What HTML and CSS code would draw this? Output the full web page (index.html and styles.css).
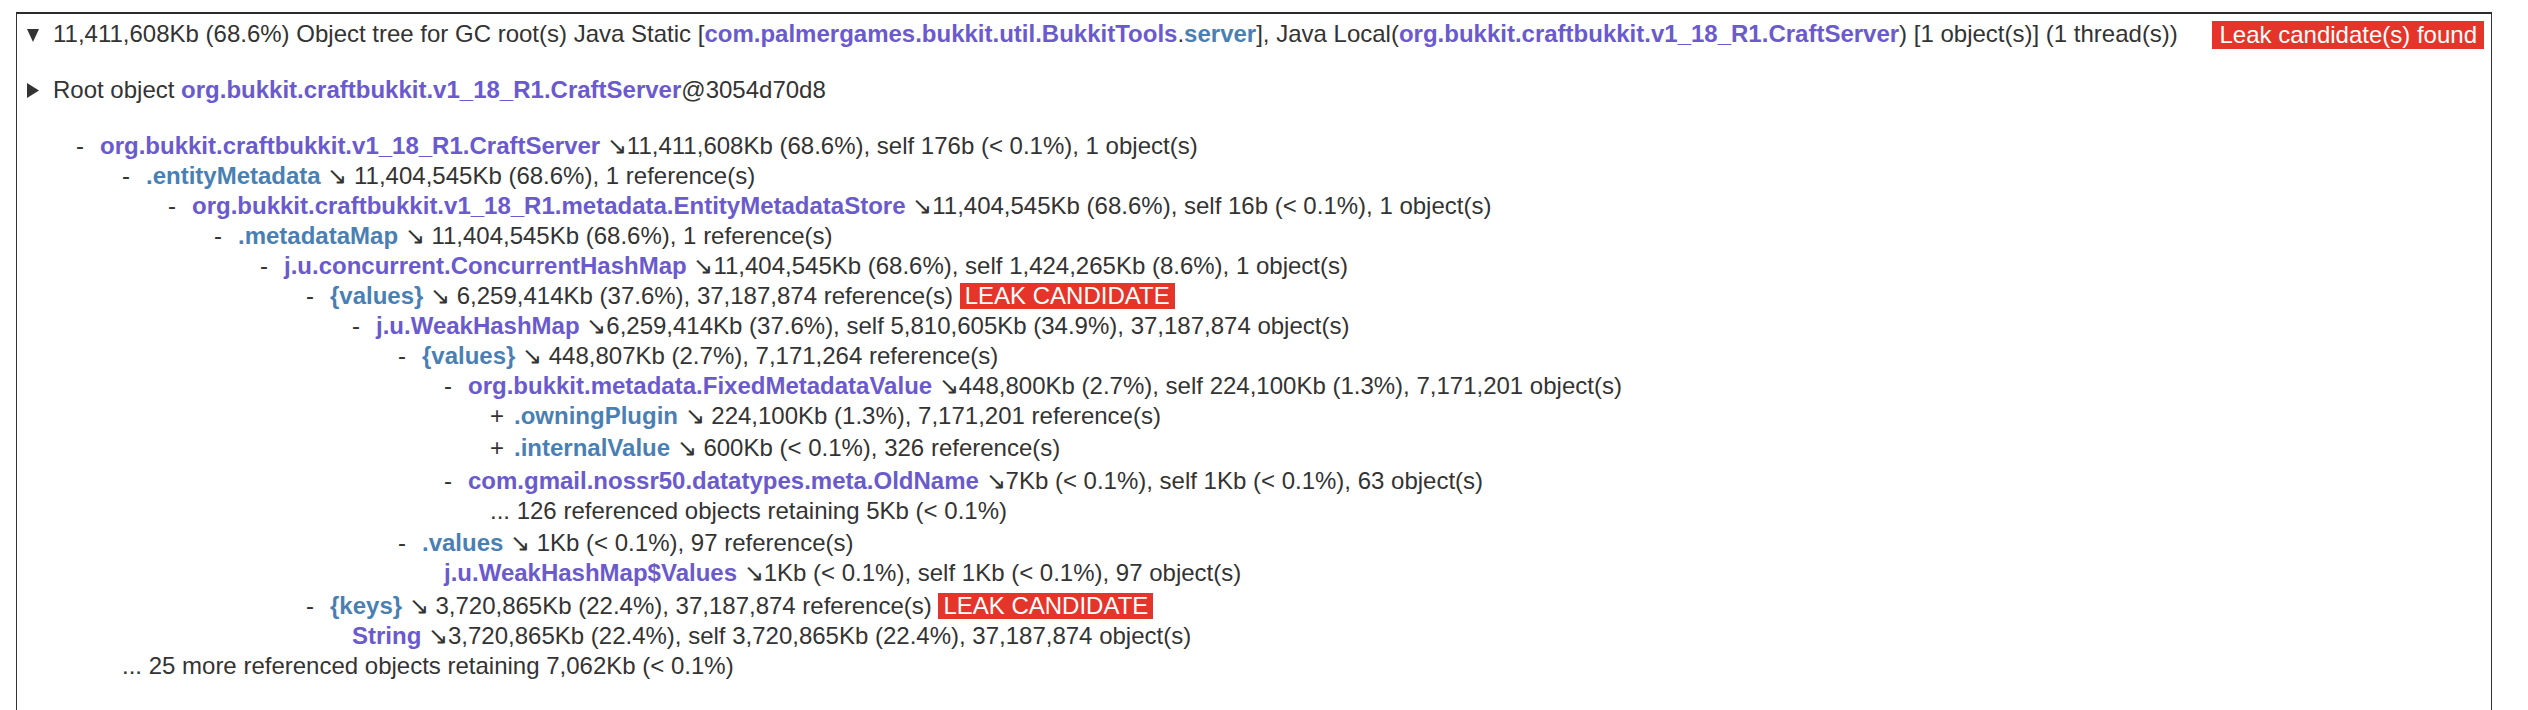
FILE: index.html
```html
<!DOCTYPE html>
<html>
<head>
<meta charset="utf-8">
<title>Object tree</title>
<link rel="stylesheet" href="styles.css">
</head>
<body>
<div class="panel">
  <div class="head">
    <div class="head-text"><svg class="tri tri-down" width="12" height="13" viewBox="0 0 12 13"><polygon points="0,0 12,0 6,13"/></svg>11,411,608Kb (68.6%) Object tree for GC root(s) Java Static [<b class="cls">com.palmergames.bukkit.util.BukkitTools</b>.<b class="fld">server</b>], Java Local(<b class="cls">org.bukkit.craftbukkit.v1_18_R1.CraftServer</b>) [1 object(s)] (1 thread(s))</div>
    <span class="badge-big">Leak candidate(s) found</span>
  </div>
  <div class="root-line"><svg class="tri tri-right" width="12" height="15" viewBox="0 0 12 15"><polygon points="0,0 12,7.5 0,15"/></svg>Root object <b class="cls">org.bukkit.craftbukkit.v1_18_R1.CraftServer</b>@3054d70d8</div>

  <div class="tree">
    <div class="node">
      <div class="row"><span class="mk">-</span><b class="cls">org.bukkit.craftbukkit.v1_18_R1.CraftServer</b> ↘11,411,608Kb (68.6%), self 176b (&lt; 0.1%), 1 object(s)</div>
      <div class="kids">
        <div class="node">
          <div class="row"><span class="mk">-</span><b class="fld">.entityMetadata</b> ↘ 11,404,545Kb (68.6%), 1 reference(s)</div>
          <div class="kids">
            <div class="node">
              <div class="row"><span class="mk">-</span><b class="cls">org.bukkit.craftbukkit.v1_18_R1.metadata.EntityMetadataStore</b> ↘11,404,545Kb (68.6%), self 16b (&lt; 0.1%), 1 object(s)</div>
              <div class="kids">
                <div class="node">
                  <div class="row"><span class="mk">-</span><b class="fld">.metadataMap</b> ↘ 11,404,545Kb (68.6%), 1 reference(s)</div>
                  <div class="kids">
                    <div class="node">
                      <div class="row"><span class="mk">-</span><b class="cls">j.u.concurrent.ConcurrentHashMap</b> ↘11,404,545Kb (68.6%), self 1,424,265Kb (8.6%), 1 object(s)</div>
                      <div class="kids">
                        <div class="node">
                          <div class="row"><span class="mk">-</span><b class="fld">{values}</b> ↘ 6,259,414Kb (37.6%), 37,187,874 reference(s) <span class="badge">LEAK CANDIDATE</span></div>
                          <div class="kids">
                            <div class="node">
                              <div class="row"><span class="mk">-</span><b class="cls">j.u.WeakHashMap</b> ↘6,259,414Kb (37.6%), self 5,810,605Kb (34.9%), 37,187,874 object(s)</div>
                              <div class="kids">
                                <div class="node">
                                  <div class="row"><span class="mk">-</span><b class="fld">{values}</b> ↘ 448,807Kb (2.7%), 7,171,264 reference(s)</div>
                                  <div class="kids">
                                    <div class="node">
                                      <div class="row"><span class="mk">-</span><b class="cls">org.bukkit.metadata.FixedMetadataValue</b> ↘448,800Kb (2.7%), self 224,100Kb (1.3%), 7,171,201 object(s)</div>
                                      <div class="kids">
                                        <div class="node">
                                          <div class="row"><span class="mk">+</span><b class="fld">.owningPlugin</b> ↘ 224,100Kb (1.3%), 7,171,201 reference(s)</div>
                                        </div>
                                        <div class="node gap-s">
                                          <div class="row"><span class="mk">+</span><b class="fld">.internalValue</b> ↘ 600Kb (&lt; 0.1%), 326 reference(s)</div>
                                        </div>
                                      </div>
                                    </div>
                                    <div class="node gap-l">
                                      <div class="row"><span class="mk">-</span><b class="cls">com.gmail.nossr50.datatypes.meta.OldName</b> ↘7Kb (&lt; 0.1%), self 1Kb (&lt; 0.1%), 63 object(s)</div>
                                      <div class="kids">
                                        <div class="row">... 126 referenced objects retaining 5Kb (&lt; 0.1%)</div>
                                      </div>
                                    </div>
                                  </div>
                                </div>
                                <div class="node gap-s">
                                  <div class="row"><span class="mk">-</span><b class="fld">.values</b> ↘ 1Kb (&lt; 0.1%), 97 reference(s)</div>
                                  <div class="kids">
                                    <div class="row"><b class="cls">j.u.WeakHashMap$Values</b> ↘1Kb (&lt; 0.1%), self 1Kb (&lt; 0.1%), 97 object(s)</div>
                                  </div>
                                </div>
                              </div>
                            </div>
                          </div>
                        </div>
                        <div class="node gap-l">
                          <div class="row"><span class="mk">-</span><b class="fld">{keys}</b> ↘ 3,720,865Kb (22.4%), 37,187,874 reference(s) <span class="badge">LEAK CANDIDATE</span></div>
                          <div class="kids">
                            <div class="row"><b class="cls">String</b> ↘3,720,865Kb (22.4%), self 3,720,865Kb (22.4%), 37,187,874 object(s)</div>
                          </div>
                        </div>
                      </div>
                    </div>
                  </div>
                </div>
              </div>
            </div>
          </div>
        </div>
        <div class="row">... 25 more referenced objects retaining 7,062Kb (&lt; 0.1%)</div>
      </div>
    </div>
  </div>
</div>
</body>
</html>
```

FILE: styles.css
```css
html, body {
  margin: 0;
  padding: 0;
  background: #ffffff;
  overflow: hidden;
}

body {
  font-family: "Liberation Sans", Arial, Helvetica, sans-serif;
  font-size: 24px;
  color: #333333;
}

.panel {
  box-sizing: border-box;
  width: 2476px;
  height: 698px;
  margin: 12px 0 0 16px;
  border: 1px solid #333333;
  border-top: 2px solid #2b2b2b;
  border-bottom: 0;
  padding: 0 7px 0 10px;
}

.head {
  display: flex;
  justify-content: space-between;
  align-items: flex-start;
  padding-top: 5px;
}

.head-text {
  line-height: 30px;
  white-space: nowrap;
}

.tri {
  display: inline-block;
  margin-right: 14px;
  fill: #333333;
}

.badge-big {
  background: #e5352a;
  color: #ffffff;
  line-height: 28px;
  padding: 0 7px;
  margin-top: 2px;
  white-space: nowrap;
}

.root-line {
  line-height: 30px;
  margin-top: 26px;
  white-space: nowrap;
}

.tree {
  margin-top: 26px;
  padding-left: 49px;
}

.row {
  line-height: 30px;
  white-space: nowrap;
}

.kids {
  padding-left: 46px;
}

.gap-s {
  margin-top: 1.6px;
}

.gap-l {
  margin-top: 3.4px;
}

.mk {
  display: inline-block;
  width: 24px;
}

.cls {
  color: #6a5acd;
  font-weight: bold;
}

.fld {
  color: #4a7fb3;
  font-weight: bold;
}

.badge {
  display: inline-block;
  background: #e5352a;
  color: #ffffff;
  line-height: 26px;
  padding: 0 5px;
}
```
